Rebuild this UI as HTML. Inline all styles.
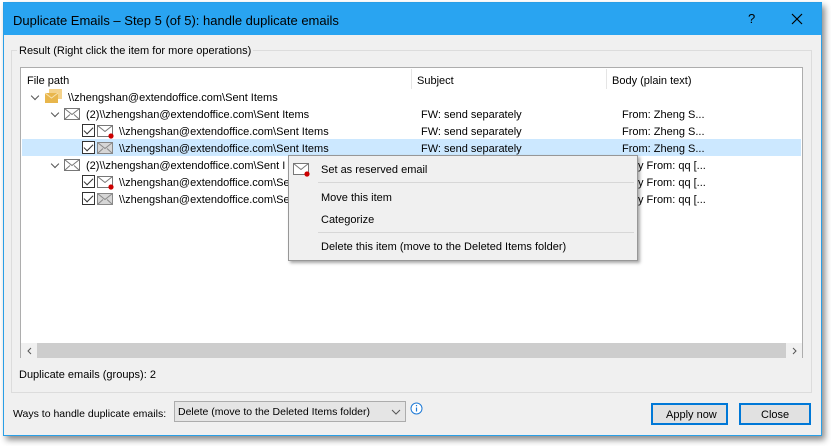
<!DOCTYPE html>
<html><head><meta charset="utf-8"><style>
*{margin:0;padding:0;box-sizing:border-box}
body{width:831px;height:446px;background:#fff;position:relative;overflow:hidden;font-family:"Liberation Sans",sans-serif;font-size:11px;color:#000}
.a{position:absolute;white-space:nowrap}
.t{margin-top:2px}
.win{position:absolute;left:3px;top:2px;width:819px;height:434px;background:#f0f0f0;border:1px solid #2a9fe6;box-shadow:3px 4px 6px rgba(0,0,0,.45)}
.title{position:absolute;left:0;top:0;width:817px;height:32px;background:#29a4f1}
.chk{position:absolute;width:13px;height:13px;border:1px solid #333;background:#fff}
.chk:after{content:"";position:absolute;left:3px;top:0px;width:4px;height:8px;border:solid #333;border-width:0 1.5px 1.5px 0;transform:rotate(45deg)}
.chev{position:absolute;width:6px;height:6px;border:solid #555;border-width:0 1.3px 1.3px 0;transform:rotate(45deg)}
</style></head><body>
<div class="win">
<div class="title"></div>
<div class="a t" style="left:9px;top:8px;font-size:13px">Duplicate Emails – Step 5 (of 5): handle duplicate emails</div>
<div class="a" style="left:744px;top:8px;font-size:13px">?</div>
<svg class="a" style="left:787px;top:10px" width="12" height="12"><path d="M1 1L11 11M11 1L1 11" stroke="#000" stroke-width="1.2"/></svg>
</div>
<div class="a" style="left:11px;top:50px;width:801px;height:343px;border:1px solid #dcdcdc"></div>
<div class="a t" style="left:17px;top:43px;background:#f0f0f0;padding:0 2px">Result (Right click the item for more operations)</div>
<div class="a" style="left:20px;top:67px;width:783px;height:291px;background:#fff;border:1px solid #adadad"></div>
<div class="a t" style="left:27px;top:73px">File path</div>
<div class="a" style="left:411px;top:69px;width:1px;height:20px;background:#e5e5e5"></div>
<div class="a t" style="left:417px;top:73px">Subject</div>
<div class="a" style="left:606px;top:69px;width:1px;height:20px;background:#e5e5e5"></div>
<div class="a t" style="left:612px;top:73px">Body (plain text)</div>
<div class="a" style="left:22px;top:139px;width:779px;height:17px;background:#cce8ff"></div>
<div class="chev" style="left:32px;top:93px"></div>
<svg class="a" style="left:45px;top:89px" width="18" height="14"><rect x="4" y="0" width="13" height="10" fill="#f4d28a"/><rect x="0" y="4" width="13" height="10" fill="#e8b64c"/><path d="M0 4l6.5 5 6.5-5" stroke="#f8e2b0" fill="none"/></svg>
<div class="a t" style="left:68px;top:90px">\\zhengshan@extendoffice.com\Sent Items</div>
<div class="chev" style="left:52px;top:110px"></div>
<svg class="a" style="left:64px;top:108px" width="16" height="12"><rect x=".5" y=".5" width="15" height="11" fill="#fff" stroke="#777"/><path d="M.5 .5l7.5 6 7.5-6M.5 11.5l5.5-5M15.5 11.5l-5.5-5" stroke="#777" fill="none"/></svg>
<div class="a t" style="left:86px;top:107px">(2)\\zhengshan@extendoffice.com\Sent Items</div>
<div class="a t" style="left:421px;top:107px">FW: send separately</div>
<div class="a t" style="left:622px;top:107px">From: Zheng S...</div>
<div class="chk" style="left:82px;top:124px"></div>
<svg class="a" style="left:97px;top:125px" width="18" height="14"><rect x=".5" y=".5" width="15" height="11" fill="#fff" stroke="#777"/><path d="M.5 .5l7.5 6 7.5-6" stroke="#777" fill="none"/><circle cx="14" cy="11" r="2.6" fill="#c00"/></svg>
<div class="a t" style="left:119px;top:124px">\\zhengshan@extendoffice.com\Sent Items</div>
<div class="a t" style="left:421px;top:124px">FW: send separately</div>
<div class="a t" style="left:622px;top:124px">From: Zheng S...</div>
<div class="chk" style="left:82px;top:141px"></div>
<svg class="a" style="left:97px;top:142px" width="16" height="12"><rect x=".5" y=".5" width="15" height="11" fill="#d6d6d6" stroke="#888"/><path d="M.5 .5l7.5 6 7.5-6M.5 11.5l5.5-5M15.5 11.5l-5.5-5" stroke="#888" fill="none"/></svg>
<div class="a t" style="left:119px;top:141px">\\zhengshan@extendoffice.com\Sent Items</div>
<div class="a t" style="left:421px;top:141px">FW: send separately</div>
<div class="a t" style="left:622px;top:141px">From: Zheng S...</div>
<div class="chev" style="left:52px;top:161px"></div>
<svg class="a" style="left:64px;top:159px" width="16" height="12"><rect x=".5" y=".5" width="15" height="11" fill="#fff" stroke="#777"/><path d="M.5 .5l7.5 6 7.5-6M.5 11.5l5.5-5M15.5 11.5l-5.5-5" stroke="#777" fill="none"/></svg>
<div class="a t" style="left:86px;top:158px">(2)\\zhengshan@extendoffice.com\Sent I</div>
<div class="a t" style="left:638px;top:158px">y From: qq [...</div>
<div class="chk" style="left:82px;top:175px"></div>
<svg class="a" style="left:97px;top:176px" width="18" height="14"><rect x=".5" y=".5" width="15" height="11" fill="#fff" stroke="#777"/><path d="M.5 .5l7.5 6 7.5-6" stroke="#777" fill="none"/><circle cx="14" cy="11" r="2.6" fill="#c00"/></svg>
<div class="a t" style="left:119px;top:175px">\\zhengshan@extendoffice.com\Se</div>
<div class="a t" style="left:638px;top:175px">y From: qq [...</div>
<div class="chk" style="left:82px;top:192px"></div>
<svg class="a" style="left:97px;top:193px" width="16" height="12"><rect x=".5" y=".5" width="15" height="11" fill="#d6d6d6" stroke="#888"/><path d="M.5 .5l7.5 6 7.5-6M.5 11.5l5.5-5M15.5 11.5l-5.5-5" stroke="#888" fill="none"/></svg>
<div class="a t" style="left:119px;top:192px">\\zhengshan@extendoffice.com\Se</div>
<div class="a t" style="left:638px;top:192px">y From: qq [...</div>
<div class="a" style="left:21px;top:343px;width:781px;height:15px;background:#f0f0f0"></div>
<div class="a" style="left:37px;top:343px;width:749px;height:15px;background:#cdcdcd"></div>
<svg class="a" style="left:26px;top:347px" width="6" height="8"><path d="M5 1L2 4l3 3" stroke="#555" fill="none"/></svg>
<svg class="a" style="left:792px;top:347px" width="6" height="8"><path d="M1 1l3 3-3 3" stroke="#555" fill="none"/></svg>
<div class="a" style="left:288px;top:155px;width:350px;height:106px;background:#f0f0f0;border:1px solid #979797;box-shadow:2px 2px 3px rgba(0,0,0,.35)"></div>
<svg class="a" style="left:293px;top:163px" width="18" height="14"><rect x=".5" y=".5" width="15" height="11" fill="#fff" stroke="#777"/><path d="M.5 .5l7.5 6 7.5-6" stroke="#777" fill="none"/><circle cx="14" cy="11" r="2.6" fill="#c00"/></svg>
<div class="a t" style="left:321px;top:162px">Set as reserved email</div>
<div class="a" style="left:318px;top:182px;width:316px;height:1px;background:#d7d7d7"></div>
<div class="a t" style="left:321px;top:190px">Move this item</div>
<div class="a t" style="left:321px;top:212px">Categorize</div>
<div class="a" style="left:318px;top:232px;width:316px;height:1px;background:#d7d7d7"></div>
<div class="a t" style="left:321px;top:239px">Delete this item (move to the Deleted Items folder)</div>
<div class="a t" style="left:19px;top:367px">Duplicate emails (groups): 2</div>
<div class="a t" style="left:13px;top:406px;font-size:10.5px">Ways to handle duplicate emails:</div>
<div class="a" style="left:174px;top:401px;width:232px;height:21px;background:#e5e5e5;border:1px solid #acacac"></div>
<div class="a t" style="left:178px;top:404px;font-size:10.5px">Delete (move to the Deleted Items folder)</div>
<svg class="a" style="left:391px;top:408px" width="10" height="8"><path d="M1 2l4 4 4-4" stroke="#555" fill="none"/></svg>
<svg class="a" style="left:410px;top:402px" width="13" height="13"><circle cx="6.5" cy="6.5" r="5.5" fill="#fff" stroke="#1e7ad6"/><path d="M6.5 5.5v4M6.5 3v1.2" stroke="#1e7ad6" stroke-width="1.2"/></svg>
<div class="a" style="left:651px;top:403px;width:77px;height:22px;background:#e1e1e1;border:2px solid #0078d7"></div>
<div class="a t" style="left:666px;top:407px">Apply now</div>
<div class="a" style="left:739px;top:403px;width:72px;height:22px;background:#e1e1e1;border:2px solid #0078d7"></div>
<div class="a t" style="left:761px;top:407px">Close</div>
</body></html>
